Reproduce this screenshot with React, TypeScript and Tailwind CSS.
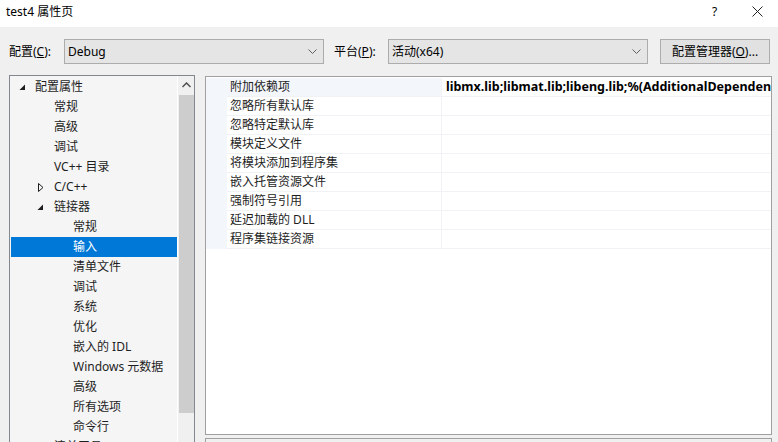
import React from "react";

const font = { fontFamily: '"Noto Sans", "Noto Sans CJK SC", sans-serif' };

type TreeItem = { label: string; level: number; toggle?: "open" | "closed"; selected?: boolean };

const treeItems: TreeItem[] = [
  { label: "配置属性", level: 0, toggle: "open" },
  { label: "常规", level: 1 },
  { label: "高级", level: 1 },
  { label: "调试", level: 1 },
  { label: "VC++ 目录", level: 1 },
  { label: "C/C++", level: 1, toggle: "closed" },
  { label: "链接器", level: 1, toggle: "open" },
  { label: "常规", level: 2 },
  { label: "输入", level: 2, selected: true },
  { label: "清单文件", level: 2 },
  { label: "调试", level: 2 },
  { label: "系统", level: 2 },
  { label: "优化", level: 2 },
  { label: "嵌入的 IDL", level: 2 },
  { label: "Windows 元数据", level: 2 },
  { label: "高级", level: 2 },
  { label: "所有选项", level: 2 },
  { label: "命令行", level: 2 },
  { label: "清单工具", level: 1, toggle: "closed" },
];

const props = [
  "附加依赖项",
  "忽略所有默认库",
  "忽略特定默认库",
  "模块定义文件",
  "将模块添加到程序集",
  "嵌入托管资源文件",
  "强制符号引用",
  "延迟加载的 DLL",
  "程序集链接资源",
];

function Chevron() {
  return (
    <svg width="9" height="5" viewBox="0 0 9 5" className="shrink-0">
      <path d="M0.5 0.5 L4.5 4.5 L8.5 0.5" fill="none" stroke="#606060" strokeWidth="1" />
    </svg>
  );
}

function Combo({ value, width }: { value: string; width: string }) {
  return (
    <div className={`${width} h-[25px] flex items-center justify-between bg-[#e5e5e5] border border-[#acacac] pl-[3px] pr-[6px] text-[12px] text-black`}>
      <span>{value}</span>
      <Chevron />
    </div>
  );
}

function Toggle({ kind }: { kind: "open" | "closed" }) {
  if (kind === "open") {
    return (
      <svg width="7" height="7" viewBox="0 0 7 7">
        <path d="M6 0.5 L6 6 L0.5 6 Z" fill="#1e1e1e" />
      </svg>
    );
  }
  return (
    <svg width="6" height="9" viewBox="0 0 6 9">
      <path d="M0.5 0.5 L5 4.5 L0.5 8.5 Z" fill="none" stroke="#1e1e1e" strokeWidth="1" />
    </svg>
  );
}

export default function App() {
  return (
    <div className="w-[778px] h-[442px] bg-[#f0f0f0] overflow-hidden flex flex-col text-black" style={font}>
      {/* title bar */}
      <div className="h-[27px] shrink-0 bg-white flex items-center pl-[6px] text-[12px]">
        <span className="-mt-[4px]">test4 属性页</span>
        <div className="ml-auto flex items-center -mt-[4px]">
          <span className="w-[10px] text-[12px] mr-[30px]">?</span>
          <svg width="11" height="11" viewBox="0 0 11 11" className="mr-[15px]">
            <path d="M0.5 0.5 L10.5 10.5 M10.5 0.5 L0.5 10.5" stroke="#222" strokeWidth="1" />
          </svg>
        </div>
      </div>

      {/* config row */}
      <div className="mt-[12px] h-[25px] shrink-0 flex items-center text-[12px] pl-[9px]">
        <span className="w-[55px]">
          配置(<span className="underline">C</span>):
        </span>
        <Combo value="Debug" width="w-[260px]" />
        <span className="ml-[10px] w-[54px]">
          平台(<span className="underline">P</span>):
        </span>
        <Combo value="活动(x64)" width="w-[260px]" />
        <div className="ml-[12px] w-[110px] h-[25px] flex items-center justify-center bg-[#e1e1e1] border border-[#adadad]">
          配置管理器(<span className="underline">O</span>)...
        </div>
      </div>

      {/* main */}
      <div className="mt-[11px] flex flex-1 min-h-0 pl-[9px]">
        {/* tree */}
        <div className="w-[186px] shrink-0 border border-[#828790] border-b-0 bg-[#f5f5f5] flex">
          <div className="flex-1 pt-[1px] pl-[1px] text-[12px] text-[#1e1e1e] overflow-hidden">
            {treeItems.map((it, i) => (
              <div
                key={i}
                className={`h-[20px] flex items-center ${it.selected ? "bg-[#0078d7] text-white" : ""}`}
              >
                <div
                  className={`flex items-center justify-end shrink-0 ${
                    it.level === 0 ? "w-[15px]" : "w-[33px]"
                  }`}
                >
                  {it.toggle && <Toggle kind={it.toggle} />}
                </div>
                <span
                  className={`whitespace-nowrap ${
                    it.level === 0 ? "ml-[9px]" : it.level === 1 ? "ml-[10px]" : "ml-[29px]"
                  }`}
                >
                  {it.label}
                </span>
              </div>
            ))}
          </div>
          <div className="w-[17px] shrink-0 bg-[#f0f0f0] border-l border-white flex flex-col items-center">
            <svg width="9" height="6" viewBox="0 0 9 6" className="mt-[6px]">
              <path d="M0.5 5 L4.5 1 L8.5 5" fill="none" stroke="#505050" strokeWidth="1.5" />
            </svg>
            <div className="mt-[7px] w-[15px] h-[318px] bg-[#cdcdcd]" />
          </div>
        </div>

        {/* right panel */}
        <div className="ml-[10px] w-[567px] flex flex-col">
          <div className="h-[359px] shrink-0 border border-[#a0a0a0] bg-white mt-[1px] pt-[1px] flex flex-col">
            {props.map((p, i) => (
              <div key={i} className="h-[19px] flex text-[12px]">
                <div className="w-[21px] shrink-0 bg-[#f3f6fb]" />
                <div
                  className={`w-[214px] shrink-0 flex items-center pl-[3px] border-b border-[#f0f2f6] ${
                    i === 0 ? "bg-[#f3f6fb]" : "bg-white"
                  } text-[#1e1e1e]`}
                >
                  {p}
                </div>
                <div className="flex-1 min-w-0 flex items-center pl-[4px] border-b border-l border-[#f0f2f6] overflow-hidden whitespace-nowrap">
                  {i === 0 && (
                    <span className="font-bold text-[12.5px]">
                      libmx.lib;libmat.lib;libeng.lib;%(AdditionalDependencies)
                    </span>
                  )}
                </div>
              </div>
            ))}
          </div>
          <div className="mt-[3px] h-[20px] shrink-0 border border-[#a0a0a0] border-b-0 bg-[#f0f0f0]" />
        </div>
      </div>
    </div>
  );
}
